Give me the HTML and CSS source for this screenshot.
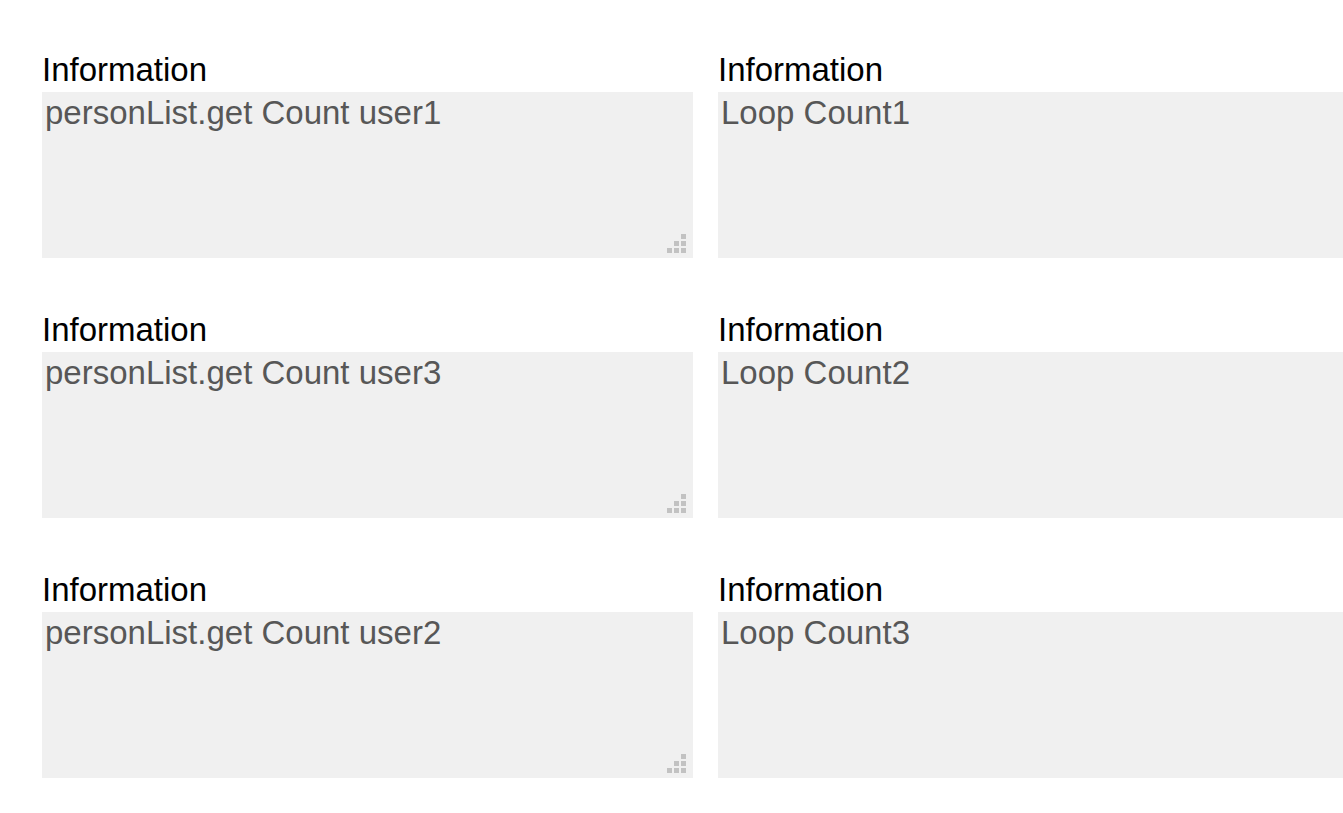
FILE: index.html
```html
<!DOCTYPE html>
<html>
<head>
<meta charset="utf-8">
<link rel="stylesheet" href="styles.css">
</head>
<body>
<div class="grid">
  <div class="field">
    <div class="label">Information</div>
    <div class="box grip">personList.get Count user1</div>
  </div>
  <div class="field">
    <div class="label">Information</div>
    <div class="box">Loop Count1</div>
  </div>
  <div class="field">
    <div class="label">Information</div>
    <div class="box grip">personList.get Count user3</div>
  </div>
  <div class="field">
    <div class="label">Information</div>
    <div class="box">Loop Count2</div>
  </div>
  <div class="field">
    <div class="label">Information</div>
    <div class="box grip">personList.get Count user2</div>
  </div>
  <div class="field">
    <div class="label">Information</div>
    <div class="box">Loop Count3</div>
  </div>
</div>
</body>
</html>
```
FILE: styles.css
```css
html, body {
  margin: 0;
  padding: 0;
  background: #ffffff;
  overflow: hidden;
}
body {
  font-family: "Liberation Sans", Arial, sans-serif;
  width: 1343px;
  height: 813px;
}
.grid {
  display: grid;
  grid-template-columns: 651px 651px;
  column-gap: 25px;
  row-gap: 53px;
  padding: 51px 0 0 42px;
}
.label {
  font-size: 33px;
  line-height: 38px;
  height: 41px;
  color: #000000;
  white-space: nowrap;
}
.box {
  position: relative;
  height: 166px;
  box-sizing: border-box;
  background: #f0f0f0;
  color: #575757;
  font-size: 33px;
  line-height: 38px;
  padding: 2px 0 0 3px;
  white-space: nowrap;
}
.grip::after {
  content: "";
  position: absolute;
  right: 7px;
  bottom: 5px;
  width: 19px;
  height: 19px;
  background:
    linear-gradient(#c2c2c2, #c2c2c2) 14px 0 / 5px 5px no-repeat,
    linear-gradient(#c2c2c2, #c2c2c2) 7px 7px / 5px 5px no-repeat,
    linear-gradient(#c2c2c2, #c2c2c2) 14px 7px / 5px 5px no-repeat,
    linear-gradient(#c2c2c2, #c2c2c2) 0 14px / 5px 5px no-repeat,
    linear-gradient(#c2c2c2, #c2c2c2) 7px 14px / 5px 5px no-repeat,
    linear-gradient(#c2c2c2, #c2c2c2) 14px 14px / 5px 5px no-repeat;
}
```
